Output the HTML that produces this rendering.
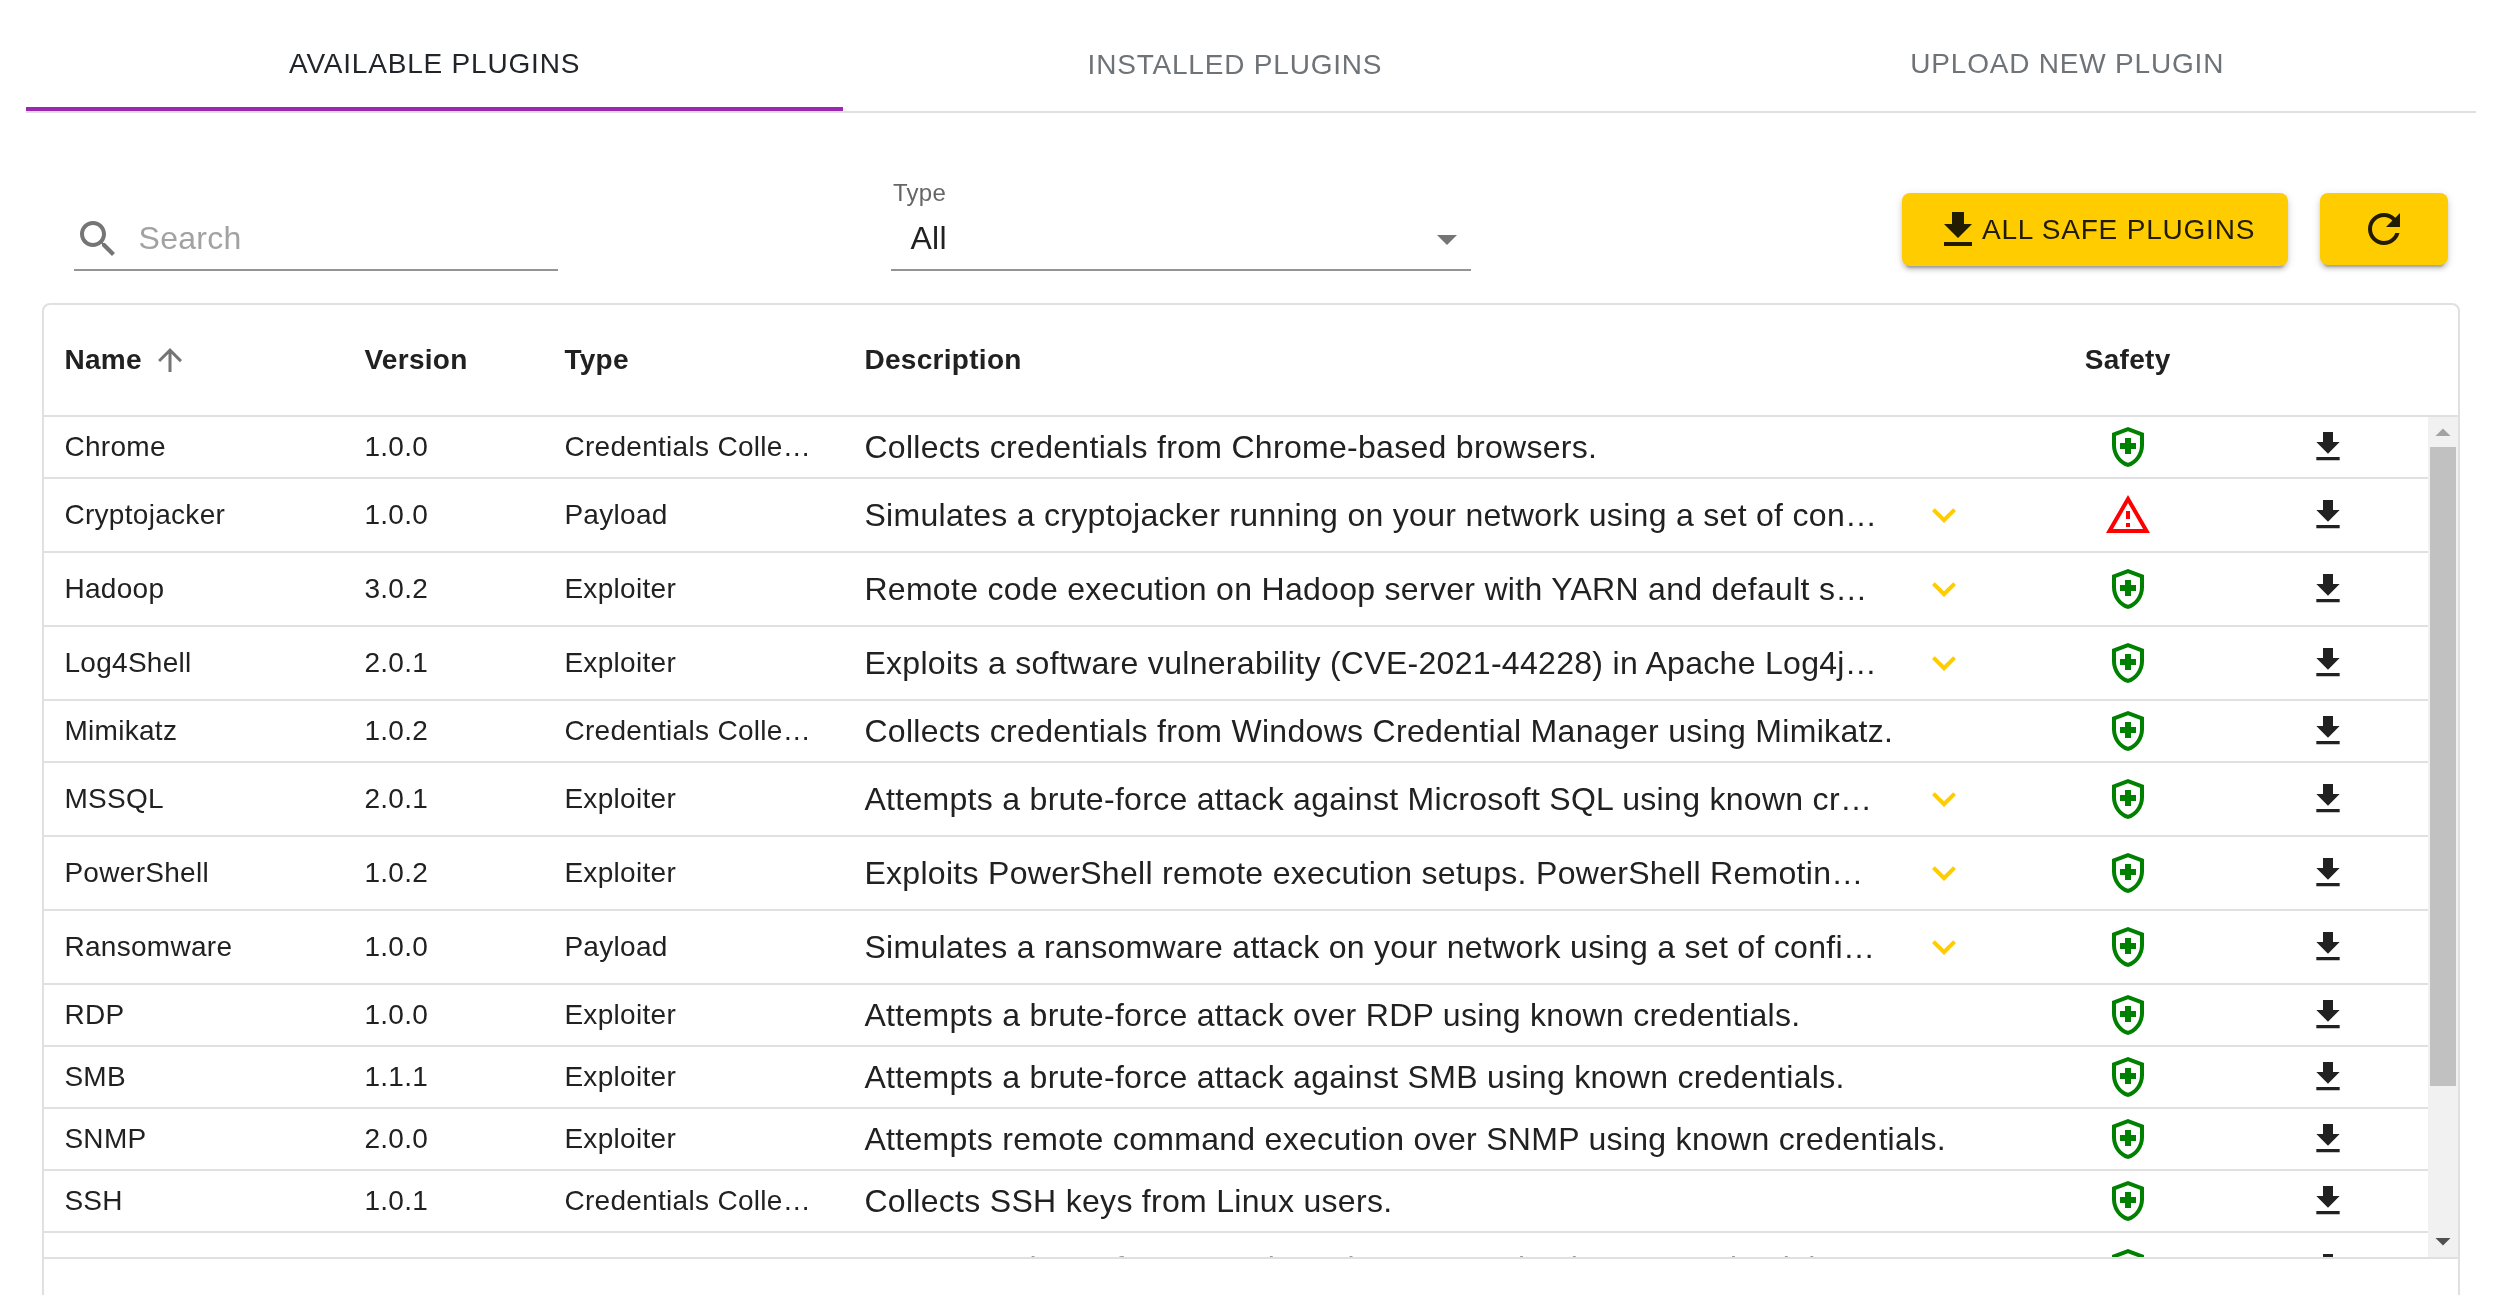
<!DOCTYPE html>
<html><head><meta charset="utf-8"><style>
html,body{margin:0;padding:0;background:#fff;width:2518px;height:1295px;overflow:hidden;}
body{position:relative;font-family:"Liberation Sans", sans-serif;}
.t{position:absolute;white-space:nowrap;}
.b{position:absolute;box-sizing:border-box;}
.i{position:absolute;display:block;}
.clip{position:absolute;overflow:hidden;}
#root{position:absolute;left:0;top:0;width:2518px;height:1295px;background:#fff;will-change:transform;overflow:hidden;}
</style></head><body><div id="root">
<div class="t" style="left:289px;top:43px;font-size:28px;line-height:42px;color:#212529;letter-spacing:0.8px;">AVAILABLE PLUGINS</div>
<div class="t" style="left:1087.6px;top:44px;font-size:28px;line-height:42px;color:#6e7378;letter-spacing:0.8px;">INSTALLED PLUGINS</div>
<div class="t" style="left:1910.3px;top:43px;font-size:28px;line-height:42px;color:#6e7378;letter-spacing:0.8px;">UPLOAD NEW PLUGIN</div>
<div class="b" style="left:26px;top:111px;width:2450px;height:2px;background:#e0e0e0;"></div>
<div class="b" style="left:26px;top:107px;width:817px;height:4px;background:#9c27b0;"></div>
<svg class="i" style="left:74px;top:215px;" width="48" height="48" viewBox="0 0 24 24"><path fill="#757575" d="M15.5 14h-.79l-.28-.27C15.41 12.59 16 11.11 16 9.5 16 5.91 13.09 3 9.5 3S3 5.91 3 9.5 5.91 16 9.5 16c1.61 0 3.09-.59 4.23-1.57l.27.28v.79l5 4.99L20.49 19l-4.99-5zm-6 0C7.01 14 5 11.99 5 9.5S7.01 5 9.5 5 14 7.01 14 9.5 11.99 14 9.5 14z"/></svg>
<div class="t" style="left:138.5px;top:214px;font-size:32px;line-height:48px;color:#a2a2a2;letter-spacing:0.3px;">Search</div>
<div class="b" style="left:74px;top:269px;width:484px;height:2px;background:#949494;"></div>
<div class="t" style="left:892.9px;top:175px;font-size:24px;line-height:36px;color:#666666;letter-spacing:0.3px;">Type</div>
<div class="t" style="left:910.4px;top:214px;font-size:32px;line-height:48px;color:#212121;letter-spacing:0.3px;">All</div>
<svg class="i" style="left:1423px;top:215px;" width="48" height="48" viewBox="0 0 24 24"><path fill="#757575" d="M7 10l5 5 5-5z"/></svg>
<div class="b" style="left:891px;top:269px;width:580px;height:2px;background:#949494;"></div>
<div class="b" style="left:1902px;top:193px;width:386px;height:73px;background:#ffcc00;box-shadow:0 6px 2px -4px rgba(0,0,0,.2),0 4px 4px 0 rgba(0,0,0,.14),0 2px 10px 0 rgba(0,0,0,.12);border-radius:8px;"></div>
<svg class="i" style="left:1934px;top:206px;" width="48" height="48" viewBox="0 0 24 24"><path fill="rgba(0,0,0,0.87)" d="M5 20h14v-2H5v2zM19 9h-4V3H9v6H5l7 7 7-7z"/></svg>
<div class="t" style="left:1982px;top:209px;font-size:28px;line-height:42px;color:rgba(0,0,0,0.87);letter-spacing:0.8px;">ALL SAFE PLUGINS</div>
<div class="b" style="left:2320px;top:193px;width:128px;height:72px;background:#ffcc00;box-shadow:0 6px 2px -4px rgba(0,0,0,.2),0 4px 4px 0 rgba(0,0,0,.14),0 2px 10px 0 rgba(0,0,0,.12);border-radius:8px;"></div>
<svg class="i" style="left:2360px;top:205px;" width="48" height="48" viewBox="0 0 24 24"><path fill="rgba(0,0,0,0.87)" d="M17.65 6.35C16.2 4.9 14.21 4 12 4c-4.42 0-7.99 3.58-7.99 8s3.57 8 7.99 8c3.73 0 6.84-2.55 7.73-6h-2.08c-.82 2.33-3.04 4-5.65 4-3.31 0-6-2.69-6-6s2.69-6 6-6c1.66 0 3.14.69 4.22 1.78L13 11h7V4l-2.35 2.35z"/></svg>
<div class="b" style="left:42px;top:303px;width:2418px;height:1100px;border:2px solid #e0e0e0;border-radius:8px;"></div>
<div class="t" style="left:64.4px;top:339px;font-size:28px;line-height:42px;color:#212121;font-weight:bold;letter-spacing:0.3px;">Name</div>
<svg class="i" style="left:152px;top:342px;" width="36" height="36" viewBox="0 0 24 24"><path fill="#757575" d="M4 12l1.41 1.41L11 7.83V20h2V7.83l5.58 5.59L20 12l-8-8-8 8z"/></svg>
<div class="t" style="left:364.4px;top:339px;font-size:28px;line-height:42px;color:#212121;font-weight:bold;letter-spacing:0.3px;">Version</div>
<div class="t" style="left:564.4px;top:339px;font-size:28px;line-height:42px;color:#212121;font-weight:bold;letter-spacing:0.3px;">Type</div>
<div class="t" style="left:864.4px;top:339px;font-size:28px;line-height:42px;color:#212121;font-weight:bold;letter-spacing:0.3px;">Description</div>
<div class="t" style="left:2084.7px;top:339px;font-size:28px;line-height:42px;color:#212121;font-weight:bold;letter-spacing:0.3px;">Safety</div>
<div class="b" style="left:44px;top:415px;width:2414px;height:2px;background:#e0e0e0;"></div>
<div class="clip" style="left:44px;top:417px;width:2384px;height:840px;">
<div class="t" style="left:20.4px;top:9px;font-size:28px;line-height:42px;color:#212121;letter-spacing:0.3px;">Chrome</div>
<div class="t" style="left:320.4px;top:9px;font-size:28px;line-height:42px;color:#212121;letter-spacing:0.3px;">1.0.0</div>
<div class="t" style="left:520.4px;top:9px;font-size:28px;line-height:42px;color:#212121;letter-spacing:0.3px;width:260px;overflow:hidden;text-overflow:ellipsis;">Credentials Collector</div>
<div class="t" style="left:820.4px;top:6px;font-size:32px;line-height:48px;color:#212121;letter-spacing:0.3px;">Collects credentials from Chrome-based browsers.</div>
<svg class="i" style="left:2060px;top:6px" width="48" height="48" viewBox="0 0 24 24"><path fill="#008000" d="M10.5 13H8v-3h2.5V7.5h3V10H16v3h-2.5v2.5h-3V13zM12 2 4 5v6.09c0 5.05 3.41 9.76 8 10.91 4.59-1.15 8-5.86 8-10.91V5l-8-3zm6 9.09c0 4-2.55 7.7-6 8.83-3.45-1.13-6-4.82-6-8.83v-4.7l6-2.25 6 2.25v4.7z"/></svg>
<svg class="i" style="left:2264px;top:10px" width="40" height="40" viewBox="0 0 24 24"><path fill="#212121" d="M5 20h14v-2H5v2zM19 9h-4V3H9v6H5l7 7 7-7z"/></svg>
<div class="b" style="left:0;top:60px;width:2384px;height:2px;background:#e0e0e0"></div>
<div class="t" style="left:20.4px;top:77px;font-size:28px;line-height:42px;color:#212121;letter-spacing:0.3px;">Cryptojacker</div>
<div class="t" style="left:320.4px;top:77px;font-size:28px;line-height:42px;color:#212121;letter-spacing:0.3px;">1.0.0</div>
<div class="t" style="left:520.4px;top:77px;font-size:28px;line-height:42px;color:#212121;letter-spacing:0.3px;width:260px;overflow:hidden;text-overflow:ellipsis;">Payload</div>
<div class="t" style="left:820.4px;top:74px;font-size:32px;line-height:48px;color:#212121;letter-spacing:0.3px;width:1016px;overflow:hidden;text-overflow:ellipsis;">Simulates a cryptojacker running on your network using a set of configurable parameters.</div>
<svg class="i" style="left:1876px;top:74px" width="48" height="48" viewBox="0 0 24 24"><path fill="#ffcc00" d="M16.59 8.59 12 13.17 7.41 8.59 6 10l6 6 6-6z"/></svg>
<svg class="i" style="left:2060px;top:74px" width="48" height="48" viewBox="0 0 24 24"><path fill="#ff0000" d="M12 5.99 19.53 19H4.47L12 5.99M12 2 1 21h22L12 2zm1 14h-2v2h2v-2zm0-6h-2v4h2v-4z"/></svg>
<svg class="i" style="left:2264px;top:78px" width="40" height="40" viewBox="0 0 24 24"><path fill="#212121" d="M5 20h14v-2H5v2zM19 9h-4V3H9v6H5l7 7 7-7z"/></svg>
<div class="b" style="left:0;top:134px;width:2384px;height:2px;background:#e0e0e0"></div>
<div class="t" style="left:20.4px;top:151px;font-size:28px;line-height:42px;color:#212121;letter-spacing:0.3px;">Hadoop</div>
<div class="t" style="left:320.4px;top:151px;font-size:28px;line-height:42px;color:#212121;letter-spacing:0.3px;">3.0.2</div>
<div class="t" style="left:520.4px;top:151px;font-size:28px;line-height:42px;color:#212121;letter-spacing:0.3px;width:260px;overflow:hidden;text-overflow:ellipsis;">Exploiter</div>
<div class="t" style="left:820.4px;top:148px;font-size:32px;line-height:48px;color:#212121;letter-spacing:0.3px;width:1016px;overflow:hidden;text-overflow:ellipsis;">Remote code execution on Hadoop server with YARN and default settings.</div>
<svg class="i" style="left:1876px;top:148px" width="48" height="48" viewBox="0 0 24 24"><path fill="#ffcc00" d="M16.59 8.59 12 13.17 7.41 8.59 6 10l6 6 6-6z"/></svg>
<svg class="i" style="left:2060px;top:148px" width="48" height="48" viewBox="0 0 24 24"><path fill="#008000" d="M10.5 13H8v-3h2.5V7.5h3V10H16v3h-2.5v2.5h-3V13zM12 2 4 5v6.09c0 5.05 3.41 9.76 8 10.91 4.59-1.15 8-5.86 8-10.91V5l-8-3zm6 9.09c0 4-2.55 7.7-6 8.83-3.45-1.13-6-4.82-6-8.83v-4.7l6-2.25 6 2.25v4.7z"/></svg>
<svg class="i" style="left:2264px;top:152px" width="40" height="40" viewBox="0 0 24 24"><path fill="#212121" d="M5 20h14v-2H5v2zM19 9h-4V3H9v6H5l7 7 7-7z"/></svg>
<div class="b" style="left:0;top:208px;width:2384px;height:2px;background:#e0e0e0"></div>
<div class="t" style="left:20.4px;top:225px;font-size:28px;line-height:42px;color:#212121;letter-spacing:0.3px;">Log4Shell</div>
<div class="t" style="left:320.4px;top:225px;font-size:28px;line-height:42px;color:#212121;letter-spacing:0.3px;">2.0.1</div>
<div class="t" style="left:520.4px;top:225px;font-size:28px;line-height:42px;color:#212121;letter-spacing:0.3px;width:260px;overflow:hidden;text-overflow:ellipsis;">Exploiter</div>
<div class="t" style="left:820.4px;top:222px;font-size:32px;line-height:48px;color:#212121;letter-spacing:0.3px;width:1016px;overflow:hidden;text-overflow:ellipsis;">Exploits a software vulnerability (CVE-2021-44228) in Apache Log4j library.</div>
<svg class="i" style="left:1876px;top:222px" width="48" height="48" viewBox="0 0 24 24"><path fill="#ffcc00" d="M16.59 8.59 12 13.17 7.41 8.59 6 10l6 6 6-6z"/></svg>
<svg class="i" style="left:2060px;top:222px" width="48" height="48" viewBox="0 0 24 24"><path fill="#008000" d="M10.5 13H8v-3h2.5V7.5h3V10H16v3h-2.5v2.5h-3V13zM12 2 4 5v6.09c0 5.05 3.41 9.76 8 10.91 4.59-1.15 8-5.86 8-10.91V5l-8-3zm6 9.09c0 4-2.55 7.7-6 8.83-3.45-1.13-6-4.82-6-8.83v-4.7l6-2.25 6 2.25v4.7z"/></svg>
<svg class="i" style="left:2264px;top:226px" width="40" height="40" viewBox="0 0 24 24"><path fill="#212121" d="M5 20h14v-2H5v2zM19 9h-4V3H9v6H5l7 7 7-7z"/></svg>
<div class="b" style="left:0;top:282px;width:2384px;height:2px;background:#e0e0e0"></div>
<div class="t" style="left:20.4px;top:293px;font-size:28px;line-height:42px;color:#212121;letter-spacing:0.3px;">Mimikatz</div>
<div class="t" style="left:320.4px;top:293px;font-size:28px;line-height:42px;color:#212121;letter-spacing:0.3px;">1.0.2</div>
<div class="t" style="left:520.4px;top:293px;font-size:28px;line-height:42px;color:#212121;letter-spacing:0.3px;width:260px;overflow:hidden;text-overflow:ellipsis;">Credentials Collector</div>
<div class="t" style="left:820.4px;top:290px;font-size:32px;line-height:48px;color:#212121;letter-spacing:0.3px;">Collects credentials from Windows Credential Manager using Mimikatz.</div>
<svg class="i" style="left:2060px;top:290px" width="48" height="48" viewBox="0 0 24 24"><path fill="#008000" d="M10.5 13H8v-3h2.5V7.5h3V10H16v3h-2.5v2.5h-3V13zM12 2 4 5v6.09c0 5.05 3.41 9.76 8 10.91 4.59-1.15 8-5.86 8-10.91V5l-8-3zm6 9.09c0 4-2.55 7.7-6 8.83-3.45-1.13-6-4.82-6-8.83v-4.7l6-2.25 6 2.25v4.7z"/></svg>
<svg class="i" style="left:2264px;top:294px" width="40" height="40" viewBox="0 0 24 24"><path fill="#212121" d="M5 20h14v-2H5v2zM19 9h-4V3H9v6H5l7 7 7-7z"/></svg>
<div class="b" style="left:0;top:344px;width:2384px;height:2px;background:#e0e0e0"></div>
<div class="t" style="left:20.4px;top:361px;font-size:28px;line-height:42px;color:#212121;letter-spacing:0.3px;">MSSQL</div>
<div class="t" style="left:320.4px;top:361px;font-size:28px;line-height:42px;color:#212121;letter-spacing:0.3px;">2.0.1</div>
<div class="t" style="left:520.4px;top:361px;font-size:28px;line-height:42px;color:#212121;letter-spacing:0.3px;width:260px;overflow:hidden;text-overflow:ellipsis;">Exploiter</div>
<div class="t" style="left:820.4px;top:358px;font-size:32px;line-height:48px;color:#212121;letter-spacing:0.3px;width:1016px;overflow:hidden;text-overflow:ellipsis;">Attempts a brute-force attack against Microsoft SQL using known credentials.</div>
<svg class="i" style="left:1876px;top:358px" width="48" height="48" viewBox="0 0 24 24"><path fill="#ffcc00" d="M16.59 8.59 12 13.17 7.41 8.59 6 10l6 6 6-6z"/></svg>
<svg class="i" style="left:2060px;top:358px" width="48" height="48" viewBox="0 0 24 24"><path fill="#008000" d="M10.5 13H8v-3h2.5V7.5h3V10H16v3h-2.5v2.5h-3V13zM12 2 4 5v6.09c0 5.05 3.41 9.76 8 10.91 4.59-1.15 8-5.86 8-10.91V5l-8-3zm6 9.09c0 4-2.55 7.7-6 8.83-3.45-1.13-6-4.82-6-8.83v-4.7l6-2.25 6 2.25v4.7z"/></svg>
<svg class="i" style="left:2264px;top:362px" width="40" height="40" viewBox="0 0 24 24"><path fill="#212121" d="M5 20h14v-2H5v2zM19 9h-4V3H9v6H5l7 7 7-7z"/></svg>
<div class="b" style="left:0;top:418px;width:2384px;height:2px;background:#e0e0e0"></div>
<div class="t" style="left:20.4px;top:435px;font-size:28px;line-height:42px;color:#212121;letter-spacing:0.3px;">PowerShell</div>
<div class="t" style="left:320.4px;top:435px;font-size:28px;line-height:42px;color:#212121;letter-spacing:0.3px;">1.0.2</div>
<div class="t" style="left:520.4px;top:435px;font-size:28px;line-height:42px;color:#212121;letter-spacing:0.3px;width:260px;overflow:hidden;text-overflow:ellipsis;">Exploiter</div>
<div class="t" style="left:820.4px;top:432px;font-size:32px;line-height:48px;color:#212121;letter-spacing:0.3px;width:1016px;overflow:hidden;text-overflow:ellipsis;">Exploits PowerShell remote execution setups. PowerShell Remoting allows users to run commands.</div>
<svg class="i" style="left:1876px;top:432px" width="48" height="48" viewBox="0 0 24 24"><path fill="#ffcc00" d="M16.59 8.59 12 13.17 7.41 8.59 6 10l6 6 6-6z"/></svg>
<svg class="i" style="left:2060px;top:432px" width="48" height="48" viewBox="0 0 24 24"><path fill="#008000" d="M10.5 13H8v-3h2.5V7.5h3V10H16v3h-2.5v2.5h-3V13zM12 2 4 5v6.09c0 5.05 3.41 9.76 8 10.91 4.59-1.15 8-5.86 8-10.91V5l-8-3zm6 9.09c0 4-2.55 7.7-6 8.83-3.45-1.13-6-4.82-6-8.83v-4.7l6-2.25 6 2.25v4.7z"/></svg>
<svg class="i" style="left:2264px;top:436px" width="40" height="40" viewBox="0 0 24 24"><path fill="#212121" d="M5 20h14v-2H5v2zM19 9h-4V3H9v6H5l7 7 7-7z"/></svg>
<div class="b" style="left:0;top:492px;width:2384px;height:2px;background:#e0e0e0"></div>
<div class="t" style="left:20.4px;top:509px;font-size:28px;line-height:42px;color:#212121;letter-spacing:0.3px;">Ransomware</div>
<div class="t" style="left:320.4px;top:509px;font-size:28px;line-height:42px;color:#212121;letter-spacing:0.3px;">1.0.0</div>
<div class="t" style="left:520.4px;top:509px;font-size:28px;line-height:42px;color:#212121;letter-spacing:0.3px;width:260px;overflow:hidden;text-overflow:ellipsis;">Payload</div>
<div class="t" style="left:820.4px;top:506px;font-size:32px;line-height:48px;color:#212121;letter-spacing:0.3px;width:1016px;overflow:hidden;text-overflow:ellipsis;">Simulates a ransomware attack on your network using a set of configurable parameters.</div>
<svg class="i" style="left:1876px;top:506px" width="48" height="48" viewBox="0 0 24 24"><path fill="#ffcc00" d="M16.59 8.59 12 13.17 7.41 8.59 6 10l6 6 6-6z"/></svg>
<svg class="i" style="left:2060px;top:506px" width="48" height="48" viewBox="0 0 24 24"><path fill="#008000" d="M10.5 13H8v-3h2.5V7.5h3V10H16v3h-2.5v2.5h-3V13zM12 2 4 5v6.09c0 5.05 3.41 9.76 8 10.91 4.59-1.15 8-5.86 8-10.91V5l-8-3zm6 9.09c0 4-2.55 7.7-6 8.83-3.45-1.13-6-4.82-6-8.83v-4.7l6-2.25 6 2.25v4.7z"/></svg>
<svg class="i" style="left:2264px;top:510px" width="40" height="40" viewBox="0 0 24 24"><path fill="#212121" d="M5 20h14v-2H5v2zM19 9h-4V3H9v6H5l7 7 7-7z"/></svg>
<div class="b" style="left:0;top:566px;width:2384px;height:2px;background:#e0e0e0"></div>
<div class="t" style="left:20.4px;top:577px;font-size:28px;line-height:42px;color:#212121;letter-spacing:0.3px;">RDP</div>
<div class="t" style="left:320.4px;top:577px;font-size:28px;line-height:42px;color:#212121;letter-spacing:0.3px;">1.0.0</div>
<div class="t" style="left:520.4px;top:577px;font-size:28px;line-height:42px;color:#212121;letter-spacing:0.3px;width:260px;overflow:hidden;text-overflow:ellipsis;">Exploiter</div>
<div class="t" style="left:820.4px;top:574px;font-size:32px;line-height:48px;color:#212121;letter-spacing:0.3px;">Attempts a brute-force attack over RDP using known credentials.</div>
<svg class="i" style="left:2060px;top:574px" width="48" height="48" viewBox="0 0 24 24"><path fill="#008000" d="M10.5 13H8v-3h2.5V7.5h3V10H16v3h-2.5v2.5h-3V13zM12 2 4 5v6.09c0 5.05 3.41 9.76 8 10.91 4.59-1.15 8-5.86 8-10.91V5l-8-3zm6 9.09c0 4-2.55 7.7-6 8.83-3.45-1.13-6-4.82-6-8.83v-4.7l6-2.25 6 2.25v4.7z"/></svg>
<svg class="i" style="left:2264px;top:578px" width="40" height="40" viewBox="0 0 24 24"><path fill="#212121" d="M5 20h14v-2H5v2zM19 9h-4V3H9v6H5l7 7 7-7z"/></svg>
<div class="b" style="left:0;top:628px;width:2384px;height:2px;background:#e0e0e0"></div>
<div class="t" style="left:20.4px;top:639px;font-size:28px;line-height:42px;color:#212121;letter-spacing:0.3px;">SMB</div>
<div class="t" style="left:320.4px;top:639px;font-size:28px;line-height:42px;color:#212121;letter-spacing:0.3px;">1.1.1</div>
<div class="t" style="left:520.4px;top:639px;font-size:28px;line-height:42px;color:#212121;letter-spacing:0.3px;width:260px;overflow:hidden;text-overflow:ellipsis;">Exploiter</div>
<div class="t" style="left:820.4px;top:636px;font-size:32px;line-height:48px;color:#212121;letter-spacing:0.3px;">Attempts a brute-force attack against SMB using known credentials.</div>
<svg class="i" style="left:2060px;top:636px" width="48" height="48" viewBox="0 0 24 24"><path fill="#008000" d="M10.5 13H8v-3h2.5V7.5h3V10H16v3h-2.5v2.5h-3V13zM12 2 4 5v6.09c0 5.05 3.41 9.76 8 10.91 4.59-1.15 8-5.86 8-10.91V5l-8-3zm6 9.09c0 4-2.55 7.7-6 8.83-3.45-1.13-6-4.82-6-8.83v-4.7l6-2.25 6 2.25v4.7z"/></svg>
<svg class="i" style="left:2264px;top:640px" width="40" height="40" viewBox="0 0 24 24"><path fill="#212121" d="M5 20h14v-2H5v2zM19 9h-4V3H9v6H5l7 7 7-7z"/></svg>
<div class="b" style="left:0;top:690px;width:2384px;height:2px;background:#e0e0e0"></div>
<div class="t" style="left:20.4px;top:701px;font-size:28px;line-height:42px;color:#212121;letter-spacing:0.3px;">SNMP</div>
<div class="t" style="left:320.4px;top:701px;font-size:28px;line-height:42px;color:#212121;letter-spacing:0.3px;">2.0.0</div>
<div class="t" style="left:520.4px;top:701px;font-size:28px;line-height:42px;color:#212121;letter-spacing:0.3px;width:260px;overflow:hidden;text-overflow:ellipsis;">Exploiter</div>
<div class="t" style="left:820.4px;top:698px;font-size:32px;line-height:48px;color:#212121;letter-spacing:0.3px;">Attempts remote command execution over SNMP using known credentials.</div>
<svg class="i" style="left:2060px;top:698px" width="48" height="48" viewBox="0 0 24 24"><path fill="#008000" d="M10.5 13H8v-3h2.5V7.5h3V10H16v3h-2.5v2.5h-3V13zM12 2 4 5v6.09c0 5.05 3.41 9.76 8 10.91 4.59-1.15 8-5.86 8-10.91V5l-8-3zm6 9.09c0 4-2.55 7.7-6 8.83-3.45-1.13-6-4.82-6-8.83v-4.7l6-2.25 6 2.25v4.7z"/></svg>
<svg class="i" style="left:2264px;top:702px" width="40" height="40" viewBox="0 0 24 24"><path fill="#212121" d="M5 20h14v-2H5v2zM19 9h-4V3H9v6H5l7 7 7-7z"/></svg>
<div class="b" style="left:0;top:752px;width:2384px;height:2px;background:#e0e0e0"></div>
<div class="t" style="left:20.4px;top:763px;font-size:28px;line-height:42px;color:#212121;letter-spacing:0.3px;">SSH</div>
<div class="t" style="left:320.4px;top:763px;font-size:28px;line-height:42px;color:#212121;letter-spacing:0.3px;">1.0.1</div>
<div class="t" style="left:520.4px;top:763px;font-size:28px;line-height:42px;color:#212121;letter-spacing:0.3px;width:260px;overflow:hidden;text-overflow:ellipsis;">Credentials Collector</div>
<div class="t" style="left:820.4px;top:760px;font-size:32px;line-height:48px;color:#212121;letter-spacing:0.3px;">Collects SSH keys from Linux users.</div>
<svg class="i" style="left:2060px;top:760px" width="48" height="48" viewBox="0 0 24 24"><path fill="#008000" d="M10.5 13H8v-3h2.5V7.5h3V10H16v3h-2.5v2.5h-3V13zM12 2 4 5v6.09c0 5.05 3.41 9.76 8 10.91 4.59-1.15 8-5.86 8-10.91V5l-8-3zm6 9.09c0 4-2.55 7.7-6 8.83-3.45-1.13-6-4.82-6-8.83v-4.7l6-2.25 6 2.25v4.7z"/></svg>
<svg class="i" style="left:2264px;top:764px" width="40" height="40" viewBox="0 0 24 24"><path fill="#212121" d="M5 20h14v-2H5v2zM19 9h-4V3H9v6H5l7 7 7-7z"/></svg>
<div class="b" style="left:0;top:814px;width:2384px;height:2px;background:#e0e0e0"></div>
<div class="t" style="left:20.4px;top:831px;font-size:28px;line-height:42px;color:#212121;letter-spacing:0.3px;">SSH</div>
<div class="t" style="left:320.4px;top:831px;font-size:28px;line-height:42px;color:#212121;letter-spacing:0.3px;">1.0.0</div>
<div class="t" style="left:520.4px;top:831px;font-size:28px;line-height:42px;color:#212121;letter-spacing:0.3px;width:260px;overflow:hidden;text-overflow:ellipsis;">Exploiter</div>
<div class="t" style="left:820.4px;top:827px;font-size:32px;line-height:48px;color:#9a9a9a;letter-spacing:0.3px;width:1016px;overflow:hidden;text-overflow:ellipsis;">Attempts a brute-force attack against SSH using known credentials.</div>
<svg class="i" style="left:1876px;top:828px" width="48" height="48" viewBox="0 0 24 24"><path fill="#ffcc00" d="M16.59 8.59 12 13.17 7.41 8.59 6 10l6 6 6-6z"/></svg>
<svg class="i" style="left:2060px;top:828px" width="48" height="48" viewBox="0 0 24 24"><path fill="#008000" d="M10.5 13H8v-3h2.5V7.5h3V10H16v3h-2.5v2.5h-3V13zM12 2 4 5v6.09c0 5.05 3.41 9.76 8 10.91 4.59-1.15 8-5.86 8-10.91V5l-8-3zm6 9.09c0 4-2.55 7.7-6 8.83-3.45-1.13-6-4.82-6-8.83v-4.7l6-2.25 6 2.25v4.7z"/></svg>
<svg class="i" style="left:2264px;top:832px" width="40" height="40" viewBox="0 0 24 24"><path fill="#212121" d="M5 20h14v-2H5v2zM19 9h-4V3H9v6H5l7 7 7-7z"/></svg>
<div class="b" style="left:0;top:888px;width:2384px;height:2px;background:#e0e0e0"></div>
</div>
<div class="b" style="left:2428px;top:417px;width:30px;height:840px;background:#f1f1f1;"></div>
<div class="b" style="left:2430px;top:447px;width:26px;height:639px;background:#c1c1c1;"></div>
<svg class="i" style="left:2428px;top:417px" width="30" height="30" viewBox="0 0 30 30"><path fill="#a3a3a3" d="M7.5 19 15 11.5 22.5 19z"/></svg>
<svg class="i" style="left:2428px;top:1227px" width="30" height="30" viewBox="0 0 30 30"><path fill="#505050" d="M7.5 11 15 18.5 22.5 11z"/></svg>
<div class="b" style="left:44px;top:1257px;width:2414px;height:2px;background:#e0e0e0;"></div>
</div></body></html>
